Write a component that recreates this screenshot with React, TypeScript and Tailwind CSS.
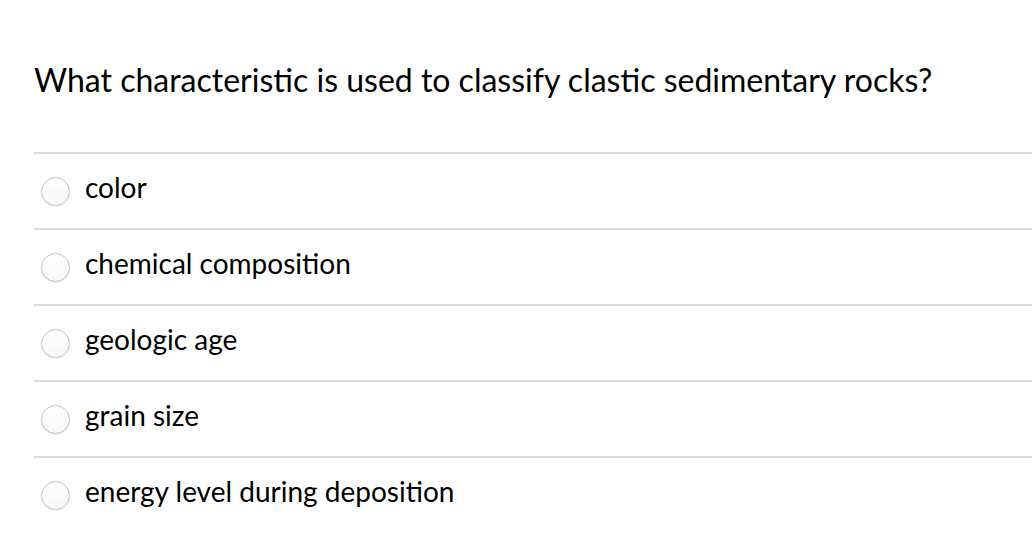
const options = [
  "color",
  "chemical composition",
  "geologic age",
  "grain size",
  "energy level during deposition",
];

export default function App() {
  return (
    <div className="min-h-[546px] bg-white pl-[34px] pt-[61px] font-['Lato','Liberation_Sans',sans-serif] text-black">
      <h1 className="text-[32px] leading-[1.2] font-normal">
        What characteristic is used to classify clastic sedimentary rocks?
      </h1>
      <ul className="mt-[53px]">
        {options.map((label) => (
          <li
            key={label}
            className="flex h-[76px] items-center gap-[15px] border-t-2 border-[#dedede] pl-[7px]"
          >
            <span className="h-[29px] w-[29px] shrink-0 rounded-full border border-[#c2c2c2] bg-gradient-to-b from-white to-[#f7f7f7] shadow-[0_1px_1px_rgba(0,0,0,0.08)]" />
            <span className="mb-[8px] text-[28px] leading-[1.2]">{label}</span>
          </li>
        ))}
      </ul>
    </div>
  );
}
